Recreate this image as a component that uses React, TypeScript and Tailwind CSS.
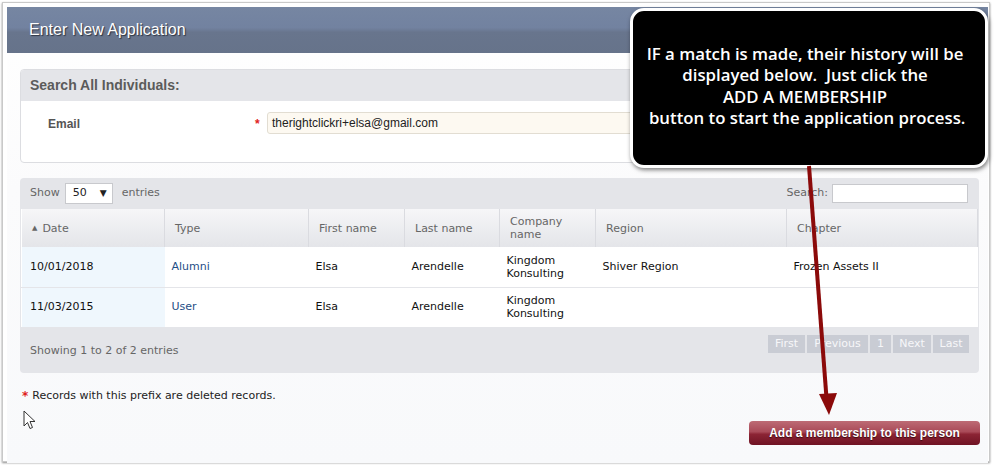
const verdana = "font-['DejaVu_Sans',Verdana,sans-serif]";
const arial = "font-['Liberation_Sans',Arial,sans-serif]";

const cols = [
  { key: "date", label: "Date", w: "w-[143px]" },
  { key: "type", label: "Type", w: "w-[144px]" },
  { key: "first", label: "First name", w: "w-[96px]" },
  { key: "last", label: "Last name", w: "w-[95px]" },
  { key: "company", label: "Company name", w: "w-[96px]" },
  { key: "region", label: "Region", w: "w-[191px]" },
  { key: "chapter", label: "Chapter", w: "w-[191px]" },
];

const rows = [
  { date: "10/01/2018", type: "Alumni", first: "Elsa", last: "Arendelle", company: "Kingdom Konsulting", region: "Shiver Region", chapter: "Frozen Assets II" },
  { date: "11/03/2015", type: "User", first: "Elsa", last: "Arendelle", company: "Kingdom Konsulting", region: "", chapter: "" },
];

const pages = [
  { label: "First", w: "w-[37px]" },
  { label: "Previous", w: "w-[61px]" },
  { label: "1", w: "w-[21px]" },
  { label: "Next", w: "w-[38px]" },
  { label: "Last", w: "w-[36px]" },
];

function Cursor() {
  return (
    <svg width="14" height="20" viewBox="0 0 14 20" className="block">
      <path d="M1 1 L1 16 L4.5 12.5 L7 18.5 L9.5 17.5 L7 11.5 L12 11.5 Z" fill="#fff" stroke="#333" strokeWidth="1" strokeLinejoin="round" />
    </svg>
  );
}

export default function App() {
  return (
    <div className="relative h-[468px] w-[995px] overflow-hidden bg-white">
      <div className="ml-[2px] mt-[2px] h-[460px] w-[988px] border border-[#c9c9c9] bg-white shadow-[0_1px_2px_rgba(0,0,0,0.45)]">
        <div className="ml-[4px] mt-[4px] flex h-[456px] w-[981px] flex-col bg-[linear-gradient(to_bottom,#ffffff_0%,#fbfbfc_40%,#f8f9fb_100%)]">
          {/* title bar */}
          <div className="flex h-[46px] shrink-0 items-center bg-[linear-gradient(to_bottom,#7686a2_0%,#7282a0_45%,#68758d_55%,#66738a_100%)] pl-[22px]">
            <h1 className={`${arial} text-[16px] text-white [text-shadow:1px_1px_1px_#2b3240]`}>Enter New Application</h1>
          </div>

          {/* search panel */}
          <div className="ml-[13px] mt-[16px] w-[959px] overflow-hidden rounded-[4px] border border-[#dcdde1] bg-white">
            <div className={`flex h-[31px] items-center bg-[#e4e5e9] pl-[9px] ${arial} text-[14px] font-bold text-[#5b5b5b]`}>
              Search All Individuals:
            </div>
            <div className="flex h-[61px] items-start pt-[11px]">
              <span className={`${arial} w-[234px] pl-[27px] pt-[3px] text-[12px] font-bold text-[#555]`}>Email</span>
              <span className={`${arial} w-[12px] pt-[3px] text-[12px] font-bold text-[#e02020]`}>*</span>
              <div className={`flex h-[22px] w-[440px] items-center rounded-[3px] border border-[#e2ddd2] bg-[#fdf9f1] pl-[4px] ${arial} text-[12px] text-[#222]`}>
                therightclickri+elsa@gmail.com
              </div>
            </div>
          </div>

          {/* table panel */}
          <div className={`ml-[13px] mt-[15px] w-[959px] rounded-[4px] bg-[#e4e5e9] pb-[1px] ${verdana} text-[11px]`}>
            <div className="flex h-[31px] items-center justify-between pl-[10px] pr-[11px] text-[#666]">
              <div className="flex items-center">
                <span>Show</span>
                <div className="ml-[5px] flex h-[21px] w-[48px] items-center justify-between border border-[#c8c9cd] bg-white pl-[7px] pr-[5px] text-[#222]">
                  <span>50</span>
                  <span className="text-[9px]">▼</span>
                </div>
                <span className="ml-[9px]">entries</span>
              </div>
              <div className="flex items-center">
                <span>Search:</span>
                <div className="ml-[4px] h-[19px] w-[136px] border border-[#c8c9cd] bg-white" />
              </div>
            </div>

            <table className="ml-[1px] w-[957px] table-fixed border-collapse border-l border-white">
              <thead>
                <tr className="h-[38px] bg-[linear-gradient(to_bottom,#f6f6f8_0%,#ebecef_60%,#e4e5e9_100%)] text-left text-[#666]">
                  {cols.map((c) => (
                    <th key={c.key} className={`${c.w} border-r border-[#dadbe0] pl-[10px] pr-[4px] align-middle font-normal leading-[13px]`}>
                      {c.key === "date" ? (
                        <span className="flex items-center">
                          <span className="mr-[5px] text-[7px]">▲</span>Date
                        </span>
                      ) : (
                        c.label
                      )}
                    </th>
                  ))}
                </tr>
              </thead>
              <tbody>
                {rows.map((r, i) => (
                  <tr key={i} className={`h-[40px] text-[#111] ${i === 0 ? "border-b border-[#e4e5e9]" : ""}`}>
                    <td className="bg-[#eff7fd] pl-[8px]">{r.date}</td>
                    <td className="bg-white pl-[7px] text-[#1f4e86]">{r.type}</td>
                    <td className="bg-white pl-[7px]">{r.first}</td>
                    <td className="bg-white pl-[7px]">{r.last}</td>
                    <td className="bg-white pl-[7px] leading-[13px]">{r.company}</td>
                    <td className="bg-white pl-[7px]">{r.region}</td>
                    <td className="bg-white pl-[7px]">{r.chapter}</td>
                  </tr>
                ))}
              </tbody>
            </table>

            <div className="flex h-[45px] items-start justify-between pl-[10px] pr-[10px] text-[#666]">
              <span className="mt-[16px]">Showing 1 to 2 of 2 entries</span>
              <div className="mt-[8px] flex gap-[2px]">
                {pages.map((p) => (
                  <span key={p.label} className={`${p.w} flex h-[18px] items-center justify-center bg-[#c9ccd4] text-[#f7f7f9]`}>
                    {p.label}
                  </span>
                ))}
              </div>
            </div>
          </div>

          {/* legend + cursor */}
          <div className={`ml-[15px] mt-[14px] flex items-center ${verdana} text-[11px] text-[#222]`}>
            <span className="mr-[4px] text-[12px] font-bold text-[#e02020]">*</span>
            Records with this prefix are deleted records.
          </div>
          <div className="ml-[16px] mt-[5px]">
            <Cursor />
          </div>

          <div className="-mt-[9px] flex justify-end pr-[8px]">
            <button className={`flex h-[24px] w-[231px] items-center justify-center rounded-[4px] bg-[linear-gradient(to_bottom,#bd6b75_0%,#a94a58_45%,#8c2434_55%,#6f1324_100%)] ${arial} text-[12px] font-bold text-white [text-shadow:0_1px_1px_#3a0a12]`}>
              Add a membership to this person
            </button>
          </div>
        </div>
      </div>

      {/* callout */}
      <div className="absolute left-[630px] top-[8px] flex h-[160px] w-[358px] items-center justify-center rounded-[14px] border-[3px] border-white bg-black pb-[5px] pr-[8px] shadow-[1px_2px_4px_rgba(0,0,0,0.5)]">
        <p className="whitespace-pre text-center font-['Open_Sans','Noto_Sans',sans-serif] text-[16.8px] font-semibold leading-[21.5px] text-white">
          {"IF a match is made, their history will be\ndisplayed below.  Just click the\nADD A MEMBERSHIP\n button to start the application process."}
        </p>
      </div>

      {/* arrow */}
      <svg className="pointer-events-none absolute left-0 top-0" width="995" height="468">
        <line x1="809" y1="166" x2="826.5" y2="398" stroke="#8b0a0a" strokeWidth="4" />
        <polygon points="819,394 837,393 829,415" fill="#8b0a0a" />
      </svg>
    </div>
  );
}
